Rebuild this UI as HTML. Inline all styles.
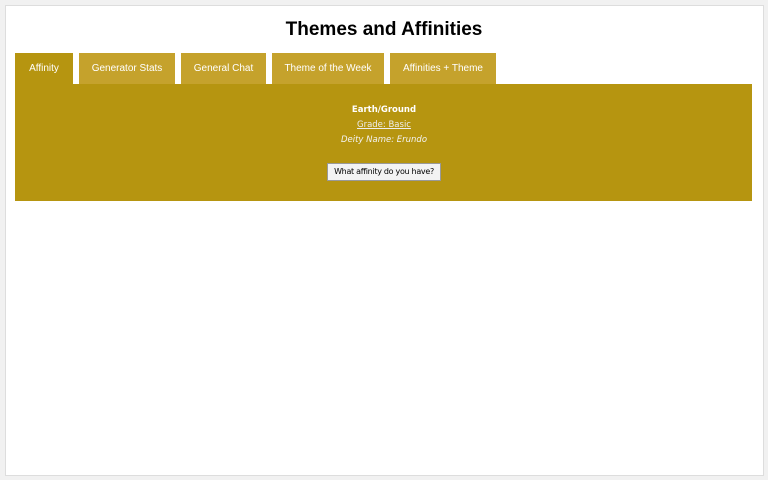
<!DOCTYPE html>
<html><head><style>
body{margin:0;background:#f1f1f1;width:768px;height:480px;font-family:"Liberation Sans",sans-serif;}
.card{position:absolute;left:5px;top:5px;width:757px;height:469px;background:#fff;border:1px solid #ddd;}
h1{position:absolute;left:0;width:768px;top:19px;margin:0;text-align:center;font-size:19px;font-weight:bold;color:#000;}
.tab{position:absolute;top:53px;height:31px;background:#c5a22c;color:#fff;font-size:10px;line-height:31px;text-align:center;}
.panel{position:absolute;left:15px;top:84px;width:737px;height:117px;background:#b69510;}
.t{position:absolute;left:0;width:768px;text-align:center;color:#fff;font-size:8.5px;font-family:"DejaVu Sans",sans-serif;}
.btn{position:absolute;left:327px;top:163px;width:114px;height:18px;background:#f3f3f3;border:1px solid #999;box-sizing:border-box;font-size:8px;line-height:16px;text-align:center;color:#000;font-family:"DejaVu Sans",sans-serif;white-space:nowrap;letter-spacing:-0.3px;}
</style></head><body>
<div class="card"></div>
<h1>Themes and Affinities</h1>
<div class="panel"></div>
<div class="tab" style="left:15px;width:58px;background:#b69510;height:32px">Affinity</div>
<div class="tab" style="left:79px;width:96px">Generator Stats</div>
<div class="tab" style="left:181px;width:85px">General Chat</div>
<div class="tab" style="left:272px;width:112px">Theme of the Week</div>
<div class="tab" style="left:390px;width:106px">Affinities + Theme</div>
<div class="t" style="top:105px;font-weight:bold">Earth/Ground</div>
<div class="t" style="top:120px;text-decoration:underline;color:#eee">Grade: Basic</div>
<div class="t" style="top:135px;font-style:italic;color:#f3f3f3">Deity Name: Erundo</div>
<div class="btn">What affinity do you have?</div>
</body></html>
